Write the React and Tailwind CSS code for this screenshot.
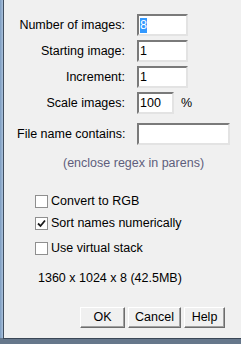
import React from "react";

const font = { fontFamily: '"Liberation Sans", Arial, sans-serif' };

const Field = ({ value, selected, width = "w-[51px]" }) => (
  <div
    className={`${width} h-[22px] bg-white border-2 border-t-[#7a7a7a] border-l-[#7a7a7a] border-b-[#e3e3e3] border-r-[#e3e3e3] flex items-center pl-[1px]`}
  >
    {value &&
      (selected ? (
        <span className="bg-[#3399ff] text-white leading-[15px]">{value}</span>
      ) : (
        <span className="leading-[15px]">{value}</span>
      ))}
  </div>
);

const Row = ({ label, children }) => (
  <div className="flex items-center h-[22px]">
    <div className="w-[121px] text-right">{label}</div>
    <div className="ml-[12px] flex items-center">{children}</div>
  </div>
);

const Check = ({ label, checked }) => (
  <div className="flex items-center h-[13px] gap-[3px]">
    <div className="w-[13px] h-[13px] bg-white border border-[#8f8f8f] flex items-center justify-center">
      {checked && (
        <svg width="9" height="9" viewBox="0 0 9 9">
          <path d="M1 4.5 L3.5 7 L8 1.5" stroke="#1a1a1a" strokeWidth="1.8" fill="none" />
        </svg>
      )}
    </div>
    <span>{label}</span>
  </div>
);

const Button = ({ label, width }) => (
  <button
    className={`${width} h-[21px] bg-[#f0f0f0] border border-t-[#ffffff] border-l-[#ffffff] border-r-[#6d6d6d] border-b-[#6d6d6d] shadow-[inset_-1px_-1px_0_#a0a0a0] flex items-center justify-center text-[#000]`}
  >
    {label}
  </button>
);

export default function App() {
  return (
    <div
      className="w-[241px] h-[344px] flex flex-col bg-[#66778b] text-[12.5px] leading-[15px] text-black overflow-hidden"
      style={font}
    >
      <div className="flex flex-1">
        {/* window frame */}
        <div className="w-[3px] bg-gradient-to-r from-[#7d9cc0] to-[#a9c1dc]" />
        <div className="w-[1px] bg-[#3f4d5e]" />
        <div className="flex-1 bg-[#f0f0f0] flex flex-col">
          <div className="flex flex-col gap-[4px] pt-[14px]">
            <Row label="Number of images:">
              <Field value="8" selected />
            </Row>
            <Row label="Starting image:">
              <Field value="1" />
            </Row>
            <Row label="Increment:">
              <Field value="1" />
            </Row>
            <Row label="Scale images:">
              <Field value="100" width="w-[37px]" />
              <span className="ml-[7px]">%</span>
            </Row>
          </div>
          <div className="flex items-center h-[22px] mt-[9px] pl-[13px]">
            <span className="w-[120px]">File name contains:</span>
            <Field width="w-[93px]" />
          </div>
          <div className="mt-[11px] h-[15px] pl-[59px] text-[#5e5e7c]">
            (enclose regex in parens)
          </div>
          <div className="flex flex-col mt-[24px] pl-[31px]">
            <Check label="Convert to RGB" />
            <div className="mt-[9px]">
              <Check label="Sort names numerically" checked />
            </div>
            <div className="mt-[12px]">
              <Check label="Use virtual stack" />
            </div>
          </div>
          <div className="mt-[16px] h-[15px] pl-[34px]">1360 x 1024 x 8 (42.5MB)</div>
          <div className="flex mt-[21px] pl-[76px] gap-[3px]">
            <Button label="OK" width="w-[45px]" />
            <Button label="Cancel" width="w-[53px]" />
            <Button label="Help" width="w-[41px]" />
          </div>
        </div>
      </div>
      <div className="h-[1px] bg-[#3a4656] ml-[3px]" />
      <div className="h-[5px] bg-[#66778b]" />
    </div>
  );
}
